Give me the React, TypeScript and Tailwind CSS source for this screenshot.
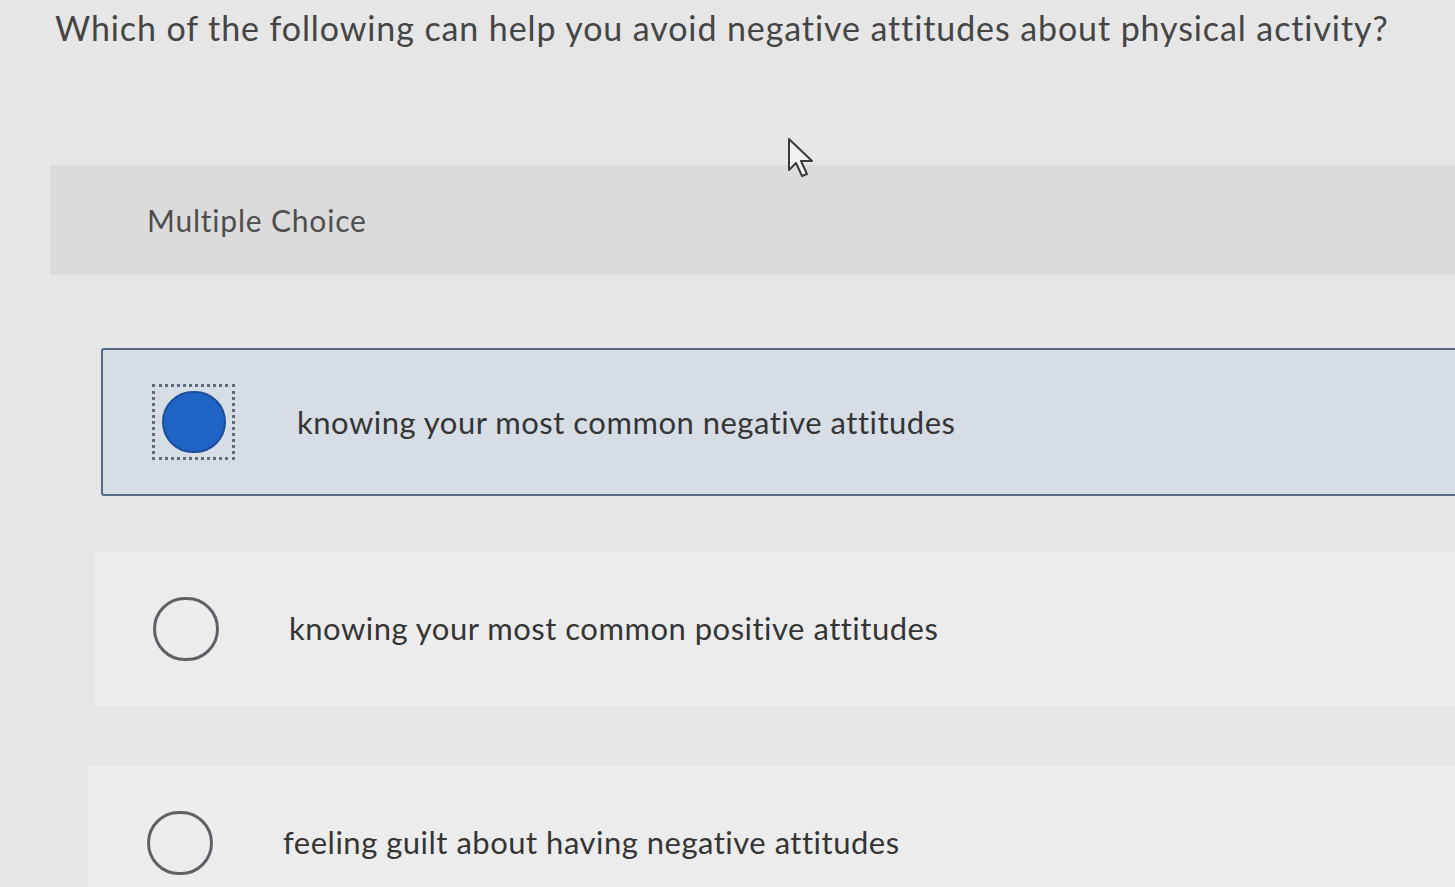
const options = [
  { id: "a", label: "knowing your most common negative attitudes" },
  { id: "b", label: "knowing your most common positive attitudes" },
  { id: "c", label: "feeling guilt about having negative attitudes" },
];

function Pointer() {
  return (
    <svg
      width="30"
      height="42"
      viewBox="0 0 30 42"
      className="absolute left-[786px] top-[136px]"
    >
      <path
        d="M3 3 L3 34 L10 27 L16 40 L21 38 L15 25 L26 25 Z"
        fill="#f2f2f2"
        stroke="#3a3a3a"
        strokeWidth="2"
        strokeLinejoin="round"
      />
    </svg>
  );
}

function Radio({ checked }: { checked: boolean }) {
  if (checked) {
    return (
      <div className="flex h-[76px] w-[83px] shrink-0 items-center justify-center border-[3px] border-dotted border-[#5e6b7c]">
        <div className="h-[62px] w-[64px] rounded-full border-2 border-[#1b4f9c] bg-[#1f63c4]" />
      </div>
    );
  }
  return (
    <div className="h-[64px] w-[66px] shrink-0 rounded-full border-[3px] border-[#5d6166]" />
  );
}

export default function App() {
  return (
    <div
      className="relative h-[887px] w-full overflow-hidden bg-[#e6e6e6] text-[#3c3c3c] [font-variant-ligatures:none]"
      style={{ fontFamily: "Lato, 'Open Sans', sans-serif" }}
    >
      <h1 className="pl-[55px] pt-[6px] text-[34px] leading-[44px] tracking-[0.9px] text-[#454545]">
        Which of the following can help you avoid negative attitudes about physical activity?
      </h1>

      <div className="ml-[50px] mt-[115px]">
        <div className="flex h-[110px] items-center bg-[#dbdbdb] pl-[97px] text-[30px] tracking-[0.8px] text-[#4e4e4e]">
          Multiple Choice
        </div>

        <div className="mt-[73px] flex flex-col text-[31px] tracking-[0.5px] text-[#353535]">
          {/* selected answer */}
          <div className="ml-[51px] flex h-[148px] items-center rounded-l-[3px] border-2 border-r-0 border-[#566b86] bg-[#d6dde5] pl-[49px]">
            <Radio checked />
            <span className="ml-[62px]">{options[0].label}</span>
          </div>

          <div className="mt-[55px] ml-[45px] flex h-[155px] items-center bg-[#ececec] pl-[58px]">
            <Radio checked={false} />
            <span className="ml-[70px]">{options[1].label}</span>
          </div>

          <div className="mt-[60px] ml-[38px] flex h-[160px] items-start bg-[#ececec] pl-[59px] pt-[45px]">
            <Radio checked={false} />
            <span className="ml-[70px] mt-[8px]">{options[2].label}</span>
          </div>
        </div>
      </div>

      <Pointer />
    </div>
  );
}
